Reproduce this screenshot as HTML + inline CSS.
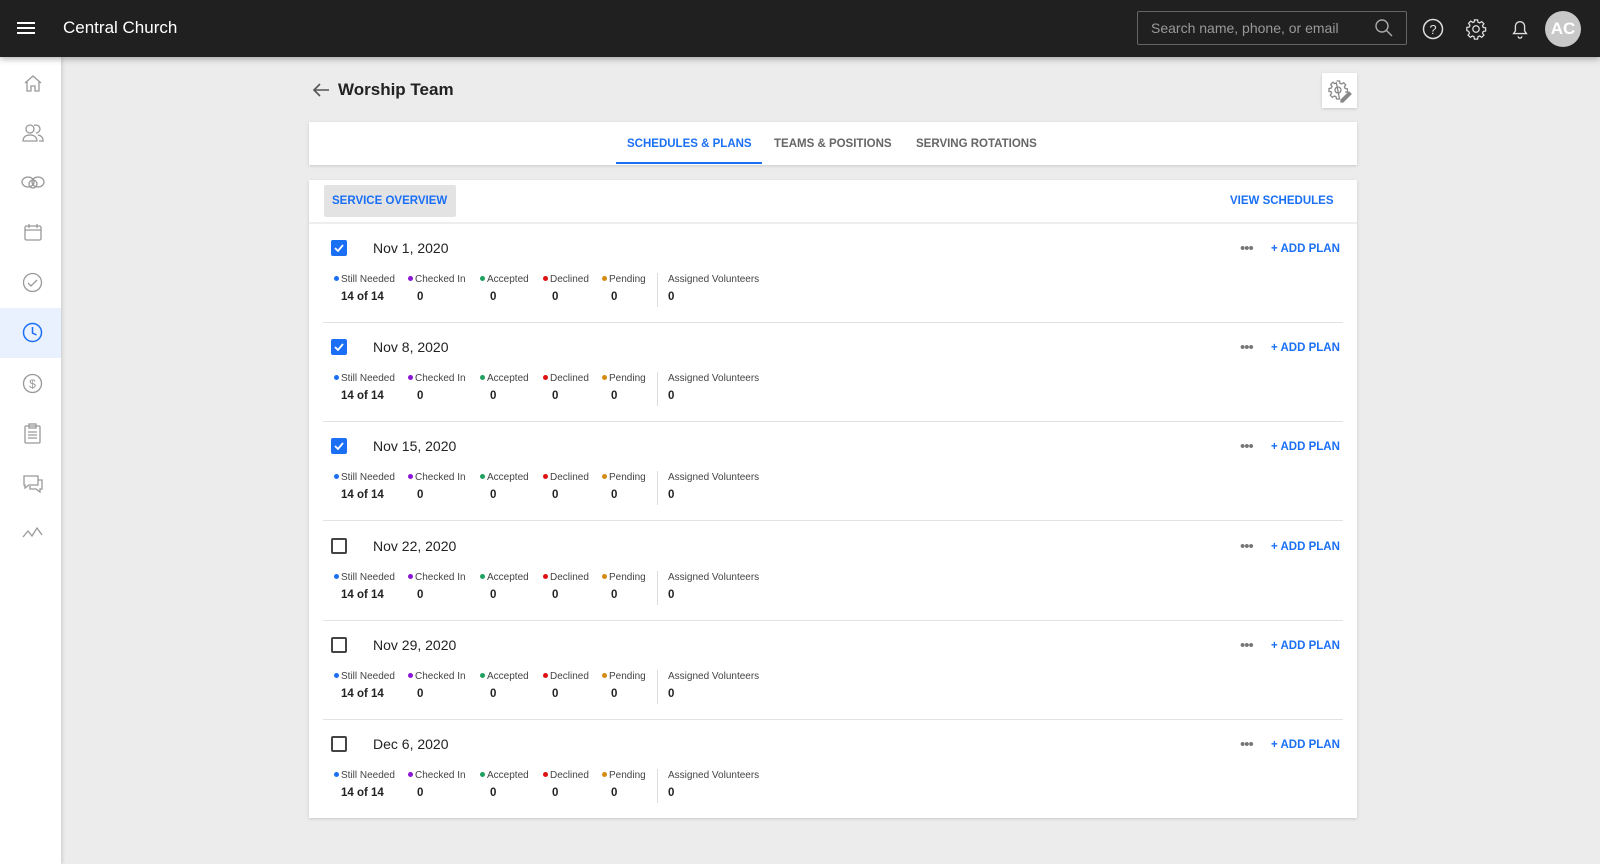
<!DOCTYPE html><html><head><style>
*{box-sizing:border-box;margin:0;padding:0}
body{width:1600px;height:864px;background:#ececec;font-family:"Liberation Sans",sans-serif;position:relative;overflow:hidden;color:#222}
.top{position:absolute;left:0;top:0;width:1600px;height:57px;background:#202020;box-shadow:0 2px 6px rgba(0,0,0,.3);z-index:2}
.side{position:absolute;left:0;top:57px;width:61px;height:807px;background:#fff;box-shadow:1px 0 4px rgba(0,0,0,.15)}
.abs{position:absolute}
.blue{color:#1a6ff5}
.card{position:absolute;background:#fff;box-shadow:0 1px 3px rgba(0,0,0,.15)}
.lbl{position:absolute;font-size:10px;color:#444;white-space:nowrap}
.val{position:absolute;font-size:11.5px;color:#222;font-weight:bold}
.dot{display:inline-block;width:5px;height:5px;border-radius:50%;margin-right:2px;vertical-align:1px}
.cb{position:absolute;width:16px;height:16px;border-radius:2px}
svg{position:absolute}
</style></head><body>
<div class="top">
<svg style="left:17px;top:21px" width="18" height="14"><g stroke="#fff" stroke-width="2"><line x1="0" y1="2" x2="18" y2="2"/><line x1="0" y1="7" x2="18" y2="7"/><line x1="0" y1="12" x2="18" y2="12"/></g></svg>
<div class="abs" style="left:63px;top:18px;color:#fff;font-size:17px">Central Church</div>
<div class="abs" style="left:1137px;top:11px;width:270px;height:34px;border:1px solid #666;border-radius:2px"></div>
<div class="abs" style="left:1151px;top:20px;color:#999;font-size:14px">Search name, phone, or email</div>
<svg style="left:1375px;top:19px" width="18" height="18"><circle cx="7" cy="7" r="6" fill="none" stroke="#aaa" stroke-width="1.4"/><line x1="11.5" y1="11.5" x2="17" y2="17" stroke="#aaa" stroke-width="1.4"/></svg>
<svg style="left:1422px;top:18px" width="22" height="22"><circle cx="11" cy="11" r="9.5" fill="none" stroke="#ddd" stroke-width="1.5"/><text x="11" y="16" font-size="13" fill="#ddd" text-anchor="middle" font-family="Liberation Sans">?</text></svg>
<svg style="left:1465px;top:18px" width="22" height="22" viewBox="0 0 24 24"><path d="M12 8.5a3.5 3.5 0 1 0 0 7a3.5 3.5 0 1 0 0-7zM10.3 2h3.4l.5 2.6 1.8.8 2.2-1.5 2.4 2.4-1.5 2.2.8 1.8 2.6.5v3.4l-2.6.5-.8 1.8 1.5 2.2-2.4 2.4-2.2-1.5-1.8.8-.5 2.6h-3.4l-.5-2.6-1.8-.8-2.2 1.5-2.4-2.4 1.5-2.2-.8-1.8L2 13.7v-3.4l2.6-.5.8-1.8-1.5-2.2 2.4-2.4 2.2 1.5 1.8-.8z" fill="none" stroke="#ddd" stroke-width="1.4"/></svg>
<svg style="left:1509px;top:18px" width="22" height="22" viewBox="0 0 24 24"><path d="M5 17h14l-2-3v-5a5 5 0 0 0-10 0v5zM10 20a2 2 0 0 0 4 0" fill="none" stroke="#ddd" stroke-width="1.5"/></svg>
<div class="abs" style="left:1545px;top:11px;width:36px;height:36px;border-radius:50%;background:#c8c8c8;color:#fff;font-size:17px;font-weight:bold;text-align:center;line-height:36px">AC</div>
</div>
<div class="side">
<div class="abs" style="left:0;top:251px;width:61px;height:50px;background:#e8f1fd"></div>
<svg style="left:23px;top:16px" width="20" height="20" viewBox="0 0 20 20" fill="none" stroke="#999" stroke-width="1.3"><path d="M2 10L10 3l8 7M4 8.5V18h4v-5h4v5h4V8.5"/></svg>
<svg style="left:22px;top:66px" width="22" height="20" viewBox="0 0 22 20" fill="none" stroke="#999" stroke-width="1.3"><circle cx="8" cy="6" r="4"/><path d="M1 18c0-4 3-6 7-6s7 2 7 6zM12 2.5a4 4 0 1 1 2 7.5M16 12c3 .5 5 2.5 5 6h-4"/></svg>
<svg style="left:21px;top:117px" width="24" height="18" viewBox="0 0 24 18" fill="none" stroke="#999" stroke-width="1.3"><ellipse cx="7" cy="8" rx="6" ry="5"/><ellipse cx="17" cy="8" rx="6" ry="5"/><circle cx="12" cy="10" r="4"/></svg>
<svg style="left:23px;top:165px" width="20" height="20" viewBox="0 0 20 20" fill="none" stroke="#999" stroke-width="1.3"><rect x="2" y="4" width="16" height="14" rx="1.5"/><path d="M2 8h16M6 2v4M14 2v4"/></svg>
<svg style="left:22px;top:215px" width="21" height="21" viewBox="0 0 21 21" fill="none" stroke="#999" stroke-width="1.3"><circle cx="10.5" cy="10.5" r="9"/><path d="M6 11l3 3 6-6"/></svg>
<svg style="left:22px;top:265px" width="21" height="21" viewBox="0 0 21 21" fill="none" stroke="#1a6ff5" stroke-width="1.5"><circle cx="10.5" cy="10.5" r="9"/><path d="M10.5 5v6l4 2"/></svg>
<svg style="left:22px;top:316px" width="21" height="21" viewBox="0 0 21 21" fill="none" stroke="#999" stroke-width="1.3"><circle cx="10.5" cy="10.5" r="9"/><text x="10.5" y="15" font-size="12" text-anchor="middle" fill="#999" stroke="none" font-family="Liberation Sans">$</text></svg>
<svg style="left:23px;top:366px" width="19" height="21" viewBox="0 0 19 21" fill="none" stroke="#999" stroke-width="1.3"><rect x="2" y="3" width="15" height="17" rx="1"/><rect x="6" y="1" width="7" height="4"/><path d="M5 9h9M5 12h9M5 15h9"/></svg>
<svg style="left:21px;top:416px" width="23" height="21" viewBox="0 0 23 21" fill="none" stroke="#999" stroke-width="1.3"><path d="M3 3h14v9H8l-4 3v-3H3z M17 7h4v9h-2v3l-4-3H9v-3"/></svg>
<svg style="left:22px;top:468px" width="21" height="16" viewBox="0 0 21 16" fill="none" stroke="#999" stroke-width="1.3"><path d="M1 12l5-6 4 5 5-8 5 7"/></svg>
</div>
<svg style="left:312px;top:82px" width="18" height="16"><path d="M17 8H2M8 2L2 8l6 6" fill="none" stroke="#555" stroke-width="1.6"/></svg>
<div class="abs" style="left:338px;top:80px;font-size:17px;font-weight:bold;color:#222">Worship Team</div>
<div class="card" style="left:1322px;top:73px;width:35px;height:35px"></div>
<svg style="left:1327px;top:79px" width="26" height="24" viewBox="0 0 26 24" fill="none" stroke="#888" stroke-width="1.3"><circle cx="11" cy="11" r="3"/><path d="M9.5 2h3l.5 2.3 1.6.7 2-1.3 2.1 2.1-1.3 2 .7 1.6 2.3.5v3l-2.3.5M12.5 20h-3l-.5-2.3-1.6-.7-2 1.3-2.1-2.1 1.3-2-.7-1.6L2 12.5v-3l2.3-.5.7-1.6-1.3-2 2.1-2.1 2 1.3 1.6-.7z"/><path d="M14 21l8-8 2 2-8 8h-2z" fill="#888"/></svg>
<div class="card" style="left:309px;top:122px;width:1048px;height:43px"></div>
<div class="abs blue" style="left:627px;top:138px;font-size:11.5px;font-weight:bold">SCHEDULES &amp; PLANS</div>
<div class="abs" style="left:616px;top:162px;width:146px;height:2px;background:#1a6ff5"></div>
<div class="abs" style="left:774px;top:138px;font-size:11.5px;font-weight:bold;color:#666">TEAMS &amp; POSITIONS</div>
<div class="abs" style="left:916px;top:138px;font-size:11.5px;font-weight:bold;color:#666">SERVING ROTATIONS</div>
<div class="card" style="left:309px;top:180px;width:1048px;height:638px"></div>
<div class="abs" style="left:309px;top:222px;width:1048px;height:2px;background:#eee"></div>
<div class="abs" style="left:324px;top:185px;width:132px;height:32px;background:#e3e3e3;border-radius:2px"></div>
<div class="abs blue" style="left:332px;top:195px;font-size:11.5px;font-weight:bold">SERVICE OVERVIEW</div>
<div class="abs blue" style="left:1230px;top:195px;font-size:11.5px;font-weight:bold">VIEW SCHEDULES</div>
<div id="rows"></div>
<script>
var dates=["Nov 1, 2020","Nov 8, 2020","Nov 15, 2020","Nov 22, 2020","Nov 29, 2020","Dec 6, 2020"];
var h="";
for(var i=0;i<6;i++){var y=240+i*99.2;var c=i<3;
h+='<div class="cb" style="left:331px;top:'+y+'px;'+(c?'background:#1a6ff5':'border:2px solid #444')+'">'+(c?'<svg style="left:3px;top:4px" width="10" height="8"><path d="M1 4l3 3 5-6" fill="none" stroke="#fff" stroke-width="1.8"/></svg>':'')+'</div>';
h+='<div class="abs" style="left:373px;top:'+(y+0)+'px;font-size:14px;color:#222">'+dates[i]+'</div>';
h+='<div class="abs" style="left:1240px;top:'+(y+0)+'px;font-size:15px;color:#777;letter-spacing:-1px">•••</div>';
h+='<div class="abs blue" style="left:1271px;top:'+(y+3)+'px;font-size:11.5px;font-weight:bold">+ ADD PLAN</div>';
var L=[[334,"#1a6ff5","Still Needed"],[408,"#8a16d6","Checked In"],[480,"#20a060","Accepted"],[543,"#e01010","Declined"],[602,"#d68a10","Pending"]];
for(var k=0;k<5;k++)h+='<div class="lbl" style="left:'+L[k][0]+'px;top:'+(y+34)+'px"><span class="dot" style="background:'+L[k][1]+'"></span>'+L[k][2]+'</div>';
h+='<div class="lbl" style="left:668px;top:'+(y+34)+'px">Assigned Volunteers</div>';
h+='<div class="abs" style="left:657px;top:'+(y+33)+'px;width:1px;height:34px;background:#ddd"></div>';
var V=[[341,"14 of 14"],[417,"0"],[490,"0"],[552,"0"],[611,"0"],[668,"0"]];
for(var k=0;k<6;k++)h+='<div class="val" style="left:'+V[k][0]+'px;top:'+(y+51)+'px">'+V[k][1]+'</div>';
if(i<5)h+='<div class="abs" style="left:323px;top:'+(y+82)+'px;width:1020px;height:1px;background:#e2e2e2"></div>';
}
document.getElementById("rows").innerHTML=h;
</script>
</body></html>
